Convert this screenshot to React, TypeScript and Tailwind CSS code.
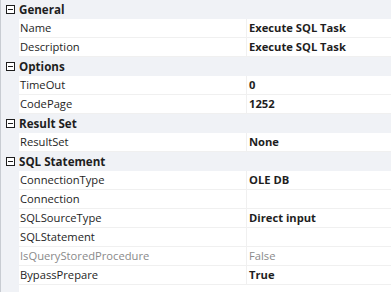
import React from "react";

type Row = { name: string; value?: string; dim?: boolean };
type Cat = { title: string; rows: Row[] };

const data: Cat[] = [
  { title: "General", rows: [{ name: "Name", value: "Execute SQL Task" }, { name: "Description", value: "Execute SQL Task" }] },
  { title: "Options", rows: [{ name: "TimeOut", value: "0" }, { name: "CodePage", value: "1252" }] },
  { title: "Result Set", rows: [{ name: "ResultSet", value: "None" }] },
  {
    title: "SQL Statement",
    rows: [
      { name: "ConnectionType", value: "OLE DB" },
      { name: "Connection" },
      { name: "SQLSourceType", value: "Direct input" },
      { name: "SQLStatement" },
      { name: "IsQueryStoredProcedure", value: "False", dim: true },
      { name: "BypassPrepare", value: "True" },
    ],
  },
];

function Minus() {
  return (
    <svg width="9" height="9" viewBox="0 0 9 9" className="block">
      <rect x="0.5" y="0.5" width="8" height="8" fill="#fff" stroke="#1e1e1e" />
      <line x1="2" y1="4.5" x2="7" y2="4.5" stroke="#1e1e1e" />
    </svg>
  );
}

export default function App() {
  return (
    <div
      className="w-[391px] h-[292px] bg-white overflow-hidden flex flex-col text-[11.2px] text-[#1e1e1e] border-l border-[#c8ccd2]"
      style={{ fontFamily: '"Open Sans", "Noto Sans", sans-serif' }}
    >
      {data.map((c) => (
        <div key={c.title} className="flex flex-col">
          <div className="h-[19px] flex items-center bg-[#f0f2f6]">
            <div className="w-[18px] flex items-center justify-center pl-[1px]">
              <Minus />
            </div>
            <span className="font-bold leading-none text-[11.6px]">{c.title}</span>
          </div>
          {c.rows.map((r) => (
            <div key={r.name} className="h-[19px] flex">
              <div className="w-[18px] bg-[#f0f2f6]" />
              <div className="w-[228px] flex items-center border-b border-[#f0f0f0] pl-[1px] border-r border-r-[#f0f0f0]">
                <span className={r.dim ? "text-[#8a8a8a] leading-none" : "leading-none"}>{r.name}</span>
              </div>
              <div className="flex-1 flex items-center border-b border-[#f0f0f0] pl-[2px]">
                {r.value && (
                  <span className={r.dim ? "text-[#8a8a8a] leading-none" : "font-bold leading-none"}>{r.value}</span>
                )}
              </div>
            </div>
          ))}
        </div>
      ))}
      <div className="flex-1 flex">
        <div className="w-[18px] bg-[#f0f2f6]" />
      </div>
    </div>
  );
}
